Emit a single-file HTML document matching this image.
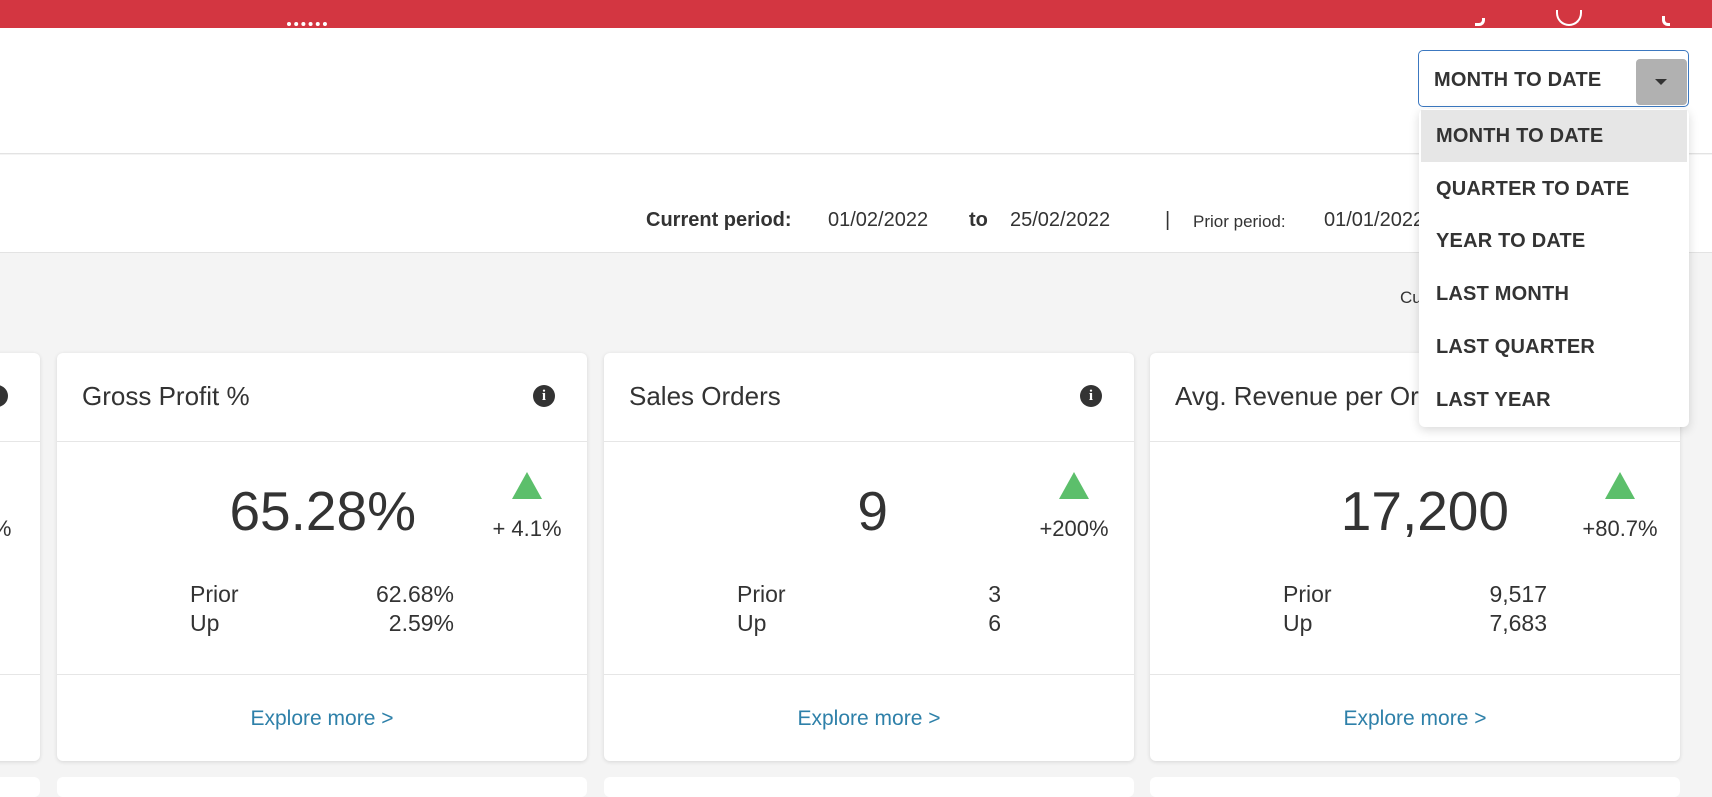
<!DOCTYPE html>
<html><head><meta charset="utf-8"><style>
*{margin:0;padding:0;box-sizing:border-box}
body{width:1712px;height:788px;overflow:hidden;background:#f4f4f4;font-family:"Liberation Sans",sans-serif;color:#333;position:relative}
.abs{position:absolute}
.top{left:0;top:0;width:1712px;height:28px;background:#d33641}
.hdr{left:0;top:28px;width:1712px;height:126px;background:#fff;border-bottom:1px solid #e3e3e3}
.per{left:0;top:155px;width:1712px;height:98px;background:#fff;border-bottom:1px solid #e3e3e3}
.card{position:absolute;top:353px;width:530px;height:408px;background:#fff;border-radius:6px;box-shadow:0 1px 4px rgba(0,0,0,.12)}
.card .t{position:absolute;left:25px;top:28px;font-size:26px;line-height:30px;white-space:nowrap}
.card .hd{position:absolute;left:0;right:0;top:88px;border-top:1px solid #e6e6e6}
.card .fd{position:absolute;left:0;right:0;top:321px;border-top:1px solid #e6e6e6}
.card .i{position:absolute;left:476px;top:32px;width:22px;height:22px;border-radius:50%;background:#333;color:#fff;font:bold 15px/22px "Liberation Serif",serif;text-align:center}
.card .big{position:absolute;right:171px;top:123px;font-size:55px;line-height:70px;white-space:nowrap}
.card .tri{position:absolute;left:455px;top:119px;width:0;height:0;border-left:15px solid transparent;border-right:15px solid transparent;border-bottom:27px solid #5cbf6b}
.card .ch{position:absolute;left:400px;width:140px;text-align:center;top:163px;font-size:22px;line-height:26px}
.card .row{position:absolute;left:133px;width:264px;font-size:23px;line-height:28px;display:flex;justify-content:space-between}
.card .ex{position:absolute;left:0;right:0;top:353px;text-align:center;color:#2e80a9;font-size:21px;line-height:26px}
.bot{position:absolute;top:777px;width:530px;height:20px;background:#fff;border-radius:6px}
.sel{left:1418px;top:50px;width:271px;height:57px;border:1px solid #3c78c0;border-radius:5px;background:#fff}
.sel span{position:absolute;left:15px;top:18px;font-size:20px;font-weight:bold;color:#333;letter-spacing:.2px}
.sel .b{position:absolute;left:217px;top:8px;width:51px;height:46px;background:#b1b1b1;border-radius:4px}
.sel .b:after{content:"";position:absolute;left:19px;top:20px;border-left:6px solid transparent;border-right:6px solid transparent;border-top:6px solid #333}
.menu{left:1419px;top:109px;width:270px;height:318px;background:#fff;border-radius:6px;box-shadow:0 3px 10px rgba(0,0,0,.15)}
.menu div{position:absolute;left:17px;font-size:20px;font-weight:bold;color:#333;letter-spacing:.2px;white-space:nowrap}
</style></head><body>
<div class="abs top"></div>
<div class="abs" style="left:287px;top:22px;width:40px;height:4px;border-top:4px dotted #fff"></div>
<div class="abs" style="left:1475px;top:18px;width:10px;height:8px;border-bottom:3px solid #fff;border-right:3px solid #fff;border-radius:0 0 6px 0"></div>
<div class="abs" style="left:1556px;top:10px;width:26px;height:16px;border:2px solid #fff;border-top:none;border-radius:0 0 13px 13px"></div>
<div class="abs" style="left:1662px;top:16px;width:8px;height:10px;border-bottom:3px solid #fff;border-left:3px solid #fff;border-radius:0 0 0 6px"></div>
<div class="abs hdr"></div>
<div class="abs per"></div>
<div class="abs" style="top:208px;left:646px;font-size:20px;white-space:nowrap;line-height:24px">
<b>Current period:</b><span style="position:absolute;left:182px">01/02/2022</span><b style="position:absolute;left:323px">to</b><span style="position:absolute;left:364px">25/02/2022</span><span style="position:absolute;left:519px">|</span><span style="position:absolute;left:547px;font-size:17px;top:2px">Prior period:</span><span style="position:absolute;left:678px">01/01/2022</span></div>
<div class="abs" style="left:1400px;top:288px;font-size:17px">Cu</div>

<div class="card" style="left:-490px"><div class="hd"></div><div class="fd"></div><div class="i">i</div><div class="ch">+4.0%</div></div>

<div class="card" style="left:57px"><div class="t">Gross Profit %</div><div class="i">i</div><div class="hd"></div>
<div class="big">65.28%</div><div class="tri"></div><div class="ch">+ 4.1%</div>
<div class="row" style="top:227px"><span>Prior</span><span>62.68%</span></div>
<div class="row" style="top:256px"><span>Up</span><span>2.59%</span></div>
<div class="fd"></div><div class="ex">Explore more &gt;</div></div>

<div class="card" style="left:604px"><div class="t">Sales Orders</div><div class="i">i</div><div class="hd"></div>
<div class="big" style="right:246px">9</div><div class="tri"></div><div class="ch">+200%</div>
<div class="row" style="top:227px"><span>Prior</span><span>3</span></div>
<div class="row" style="top:256px"><span>Up</span><span>6</span></div>
<div class="fd"></div><div class="ex">Explore more &gt;</div></div>

<div class="card" style="left:1150px"><div class="t">Avg. Revenue per Order</div><div class="i">i</div><div class="hd"></div>
<div class="big">17,200</div><div class="tri"></div><div class="ch">+80.7%</div>
<div class="row" style="top:227px"><span>Prior</span><span>9,517</span></div>
<div class="row" style="top:256px"><span>Up</span><span>7,683</span></div>
<div class="fd"></div><div class="ex">Explore more &gt;</div></div>

<div class="bot" style="left:-490px"></div><div class="bot" style="left:57px"></div><div class="bot" style="left:604px"></div><div class="bot" style="left:1150px"></div>

<div class="abs sel"><span>MONTH TO DATE</span><div class="b"></div></div>
<div class="abs menu">
<div style="left:2px;top:1px;width:266px;height:52px;background:#e6e6e6"></div>
<div style="top:16px">MONTH TO DATE</div>
<div style="top:69px">QUARTER TO DATE</div>
<div style="top:121px">YEAR TO DATE</div>
<div style="top:174px">LAST MONTH</div>
<div style="top:227px">LAST QUARTER</div>
<div style="top:280px">LAST YEAR</div>
</div>
</body></html>
